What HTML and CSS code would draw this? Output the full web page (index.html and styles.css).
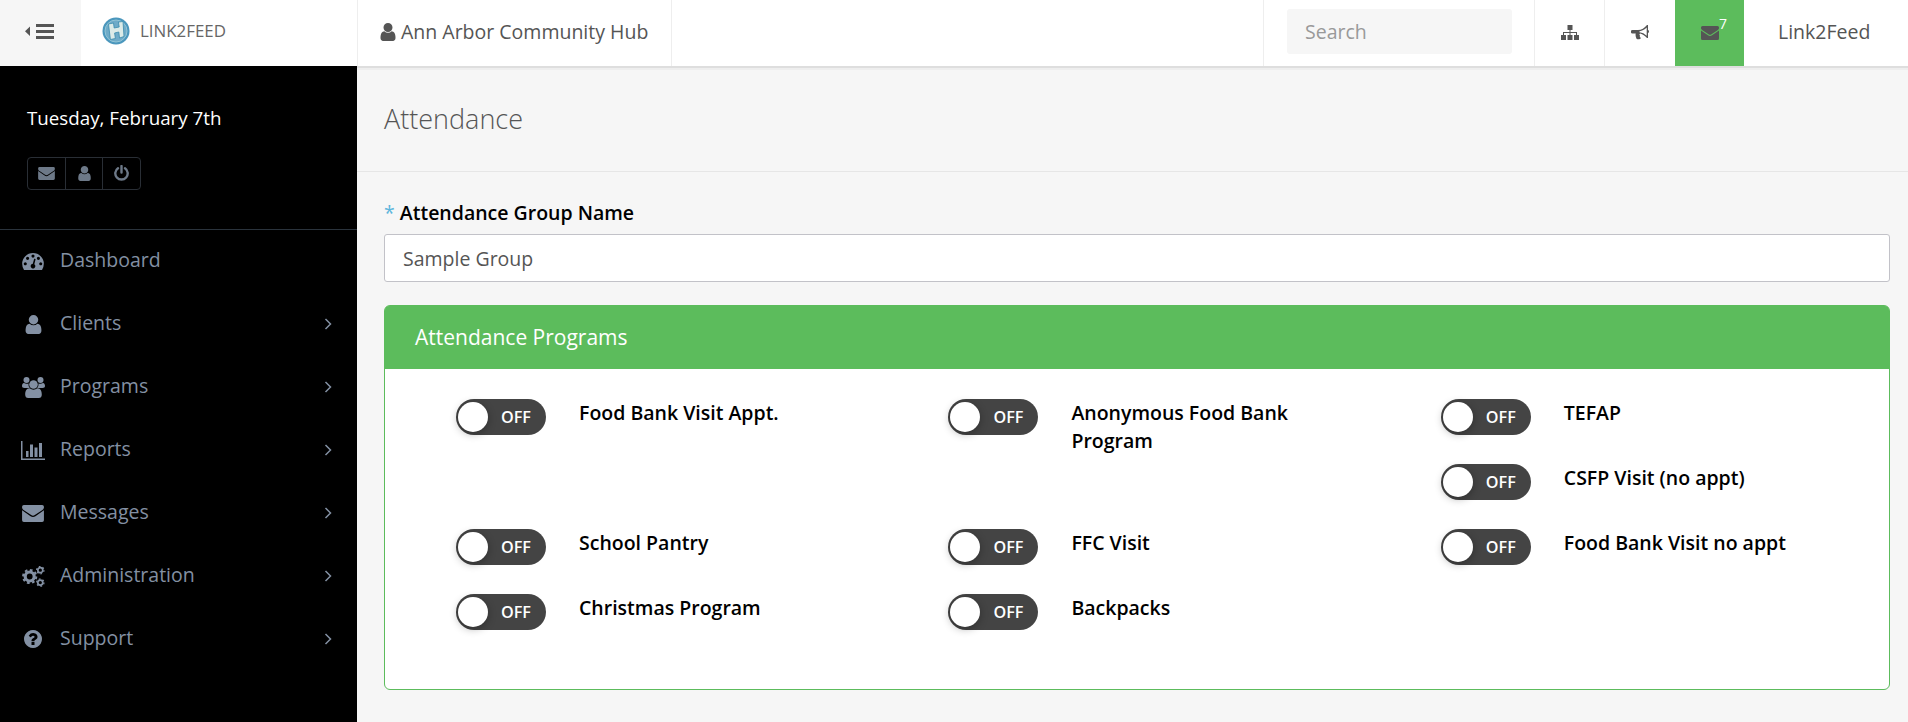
FILE: index.html
```html
<!DOCTYPE html>
<html lang="en">
<head>
  <meta charset="UTF-8">
  <title>Attendance - Link2Feed</title>
  <link rel="stylesheet" href="styles.css">
</head>
<body>

  <!-- icons used more than once -->
  <svg class="sprite" width="0" height="0">
    <symbol id="envelope" viewBox="0 0 18 14">
      <path d="M1.500 0h15A1.500 1.500 0 0 1 18 1.500v.6c0 .9-.7 1.700-1.500 2.200L10.500 8.300c-1 .7-2 .7-3 0L1.500 4.300C.7 3.800 0 3 0 2.100v-.6A1.500 1.500 0 0 1 1.500 0zM0 4.400l7 4.800c1.300.9 2.700.9 4 0l7-4.800v8.100a1.500 1.500 0 0 1-1.500 1.500h-15A1.500 1.500 0 0 1 0 12.500z"/>
    </symbol>
    <symbol id="user" viewBox="256 128 1280 1536">
      <path d="M1536 1399q0 109-62.500 187t-150.500 78h-854q-88 0-150.500-78t-62.500-187q0-85 8.500-160.500t31.500-152 58.500-131 94-89 134.500-34.500q131 128 313 128t313-128q76 0 134.500 34.500t94 89 58.500 131 31.500 152 8.500 160.500zm-256-887q0 159-112.500 271.500t-271.500 112.500-271.500-112.500-112.500-271.500 112.500-271.500 271.500-112.500 271.500 112.500 112.500 271.500z"/>
    </symbol>
    <symbol id="angle" viewBox="0 0 8 12">
      <path d="M1.500 1l5 5-5 5" fill="none" stroke="currentColor" stroke-width="1.500"/>
    </symbol>
  </svg>

  <header class="topbar">
    <a class="menu-toggle">
      <svg width="29" height="17" viewBox="0 0 29 17"><path d="M5 3.500v9.500L0 8.200zM11 1h18v3H11zM11 7h18v3H11zM11 13h18v3H11z"/></svg>
    </a>
    <a class="brand">
      <svg width="28" height="28" viewBox="0 0 28 28">
        <circle cx="14" cy="14" r="13.500" fill="#4b97bd"/>
        <circle cx="14" cy="14" r="11" fill="#6fabc8" stroke="#93c5d6"/>
        <path d="M6.500 7l5-1 .7 5 5-1-.8-5L21 4.500l1 15-4.500 1.500-.7-6-4.200 1 .8 5.500-5 1z" fill="#dcebe8" stroke="#398bad" stroke-width=".8"/>
      </svg>
      <span>LINK2FEED</span>
    </a>
    <a class="agency"><svg class="agency-icon"><use href="#user"/></svg>Ann Arbor Community Hub</a>
    <div class="search"><input type="text" placeholder="Search"></div>
    <a class="tool">
      <svg width="18" height="15" viewBox="0 0 18 15"><path d="M6.500 0h5v5h-2v2H16v3h2v5h-5v-5h2V8H9.500v2h2v5h-5v-5h2V8H3v2h2v5H0v-5h2V7h6.500V5h-2z"/></svg>
    </a>
    <a class="tool tool-news">
      <svg width="18" height="15" viewBox="0 0 18 15"><path d="M1.500 5H7c3.500 0 6.500-2 9-5h1v5q1 .4 1 1.500T17 8v5h-1c-2-2.400-4.200-4-6.800-4.600-1 .5-.9 1.500-.2 2.100-.5 1-.1 1.700 1 2.500-.7 1.600-3.500 1.700-4.500.7-.6-1.800-1.300-3.300-.8-5.200H1.500Q0 8.500 0 7.500V6q0-1 1.500-1zM8.500 6.200v1c2.700.3 5 1.500 7.200 3.500V2.400c-2.200 2-4.600 3.400-7.200 3.800z"/></svg>
    </a>
    <a class="tool tool-mail">
      <svg width="18" height="14"><use href="#envelope"/></svg>
      <span class="count">7</span>
    </a>
    <a class="account">Link2Feed</a>
  </header>

  <div class="layout">
    <aside class="sidebar">
      <div class="welcome">
        <div class="date">Tuesday, February 7th</div>
        <div class="btn-group">
          <a><svg width="17" height="13"><use href="#envelope"/></svg></a>
          <a><svg width="13" height="15"><use href="#user"/></svg></a>
          <a><svg width="15" height="16" viewBox="0 0 15 16"><path d="M4 3.200a6.200 6.200 0 1 0 7 0M7.500 1v6.500" fill="none" stroke="currentColor" stroke-width="2.400" stroke-linecap="round"/></svg></a>
        </div>
      </div>
      <nav>
        <a>
          <i><svg width="22" height="17" viewBox="0 256 1792 1408"><path d="M384 1152q0-53-37.500-90.500t-90.500-37.500-90.500 37.500-37.500 90.500 37.500 90.500 90.500 37.500 90.500-37.500 37.500-90.500zm192-448q0-53-37.500-90.500t-90.500-37.500-90.500 37.500-37.500 90.500 37.500 90.500 90.500 37.500 90.500-37.500 37.500-90.500zm428 481l101-382q6-26-7.500-48.500t-38.500-29.500-48 6.500-30 39.500l-101 382q-60 5-107 43.500t-63 98.500q-20 77 20 146t117 89 146-20 89-117q16-60-6-117t-72-91zm660-33q0-53-37.500-90.500t-90.500-37.500-90.500 37.500-37.500 90.500 37.500 90.500 90.500 37.500 90.500-37.500 37.500-90.500zm-640-640q0-53-37.500-90.500t-90.500-37.500-90.500 37.500-37.500 90.500 37.500 90.500 90.500 37.500 90.500-37.500 37.500-90.500zm448 192q0-53-37.500-90.500t-90.500-37.500-90.500 37.500-37.500 90.500 37.500 90.500 90.500 37.500 90.500-37.500 37.500-90.500zm320 448q0 261-141 483-19 29-54 29h-1402q-35 0-54-29-141-221-141-483 0-182 71-348t191-286 286-191 348-71 348 71 286 191 191 286 71 348z"/></svg></i>
          <span>Dashboard</span>
        </a>
        <a>
          <i><svg width="17" height="19"><use href="#user"/></svg></i>
          <span>Clients</span>
          <svg class="arrow"><use href="#angle"/></svg>
        </a>
        <a>
          <i><svg width="23" height="21" viewBox="0 0 23 21">
            <circle cx="4.500" cy="3" r="3"/><circle cx="18.500" cy="3" r="3"/><circle cx="11.500" cy="7.500" r="4.300"/>
            <path d="M2 6c1.500 1 3.300 1 4.600.4-.3 1.800.1 3.200 1.200 4.600H2.500C.8 11 0 10.300 0 9c0-1.500.6-3 2-3zM21 6c-1.500 1-3.300 1-4.600.4.3 1.800-.1 3.200-1.200 4.600h5.300C22.200 11 23 10.300 23 9c0-1.500-.6-3-2-3zM7.600 11.300c2.400 1.800 5.400 1.800 7.800 0 3.300-.1 4.400 3 4.400 6.400 0 2-1.200 3.300-3 3.300H6.200c-1.800 0-3-1.300-3-3.300 0-3.400 1.100-6.500 4.400-6.400z"/>
          </svg></i>
          <span>Programs</span>
          <svg class="arrow"><use href="#angle"/></svg>
        </a>
        <a>
          <i><svg width="24" height="19" viewBox="0 0 24 19"><path d="M0 0h1.500v17.500H24V19H0zM5 10h2.500v6H5zM9 3.500h3V16H9zM13.500 6.500h3V16h-3zM18 2h3v14h-3z"/></svg></i>
          <span>Reports</span>
          <svg class="arrow"><use href="#angle"/></svg>
        </a>
        <a>
          <i><svg width="22" height="17"><use href="#envelope"/></svg></i>
          <span>Messages</span>
          <svg class="arrow"><use href="#angle"/></svg>
        </a>
        <a>
          <i><svg class="gears" width="23" height="21" viewBox="0 0 23 21">
            <circle cx="7.700" cy="10.500" r="4.500" stroke-width="3.200"/>
            <circle cx="7.700" cy="10.500" r="6.600" stroke-width="2" stroke-dasharray="2.700 2.480"/>
            <circle cx="18.300" cy="4.200" r="2.500" stroke-width="1.700"/>
            <circle cx="18.300" cy="4.200" r="3.700" stroke-width="1.200" stroke-dasharray="1.700 2.170"/>
            <circle cx="18.300" cy="16.600" r="2.500" stroke-width="1.700"/>
            <circle cx="18.300" cy="16.600" r="3.700" stroke-width="1.200" stroke-dasharray="1.700 2.170"/>
          </svg></i>
          <span>Administration</span>
          <svg class="arrow"><use href="#angle"/></svg>
        </a>
        <a>
          <i><svg width="18" height="18" viewBox="128 128 1536 1536"><path d="M1024 1376v-192q0-14-9-23t-23-9h-192q-14 0-23 9t-9 23v192q0 14 9 23t23 9h192q14 0 23-9t9-23zm256-672q0-88-55.500-163t-138.500-116-170-41q-243 0-371 213-15 24 8 42l132 100q7 6 19 6 16 0 25-12 53-68 86-92 34-24 86-24 48 0 85.500 26t37.500 59q0 38-20 61t-68 45q-63 28-115.500 86.500t-52.500 125.500v36q0 14 9 23t23 9h192q14 0 23-9t9-23q0-19 21.500-49.500t54.500-49.500q32-18 49-28.500t46-35 44.500-48 28-60.500 12.500-81zm384 192q0 209-103 385.500t-279.500 279.500-385.500 103-385.500-103-279.500-279.500-103-385.500 103-385.500 279.500-279.500 385.500-103 385.500 103 279.500 279.500 103 385.500z"/></svg></i>
          <span>Support</span>
          <svg class="arrow"><use href="#angle"/></svg>
        </a>
      </nav>
    </aside>

    <main>
      <h1>Attendance</h1>
      <form class="content">
        <label class="field-label" for="groupName"><span class="required">*</span> Attendance Group Name</label>
        <input class="form-control" id="groupName" type="text" value="Sample Group">

        <section class="panel">
          <h2>Attendance Programs</h2>
          <div class="programs">
            <div class="program"><span class="switch">OFF</span><label>Food Bank Visit Appt.</label></div>
            <div class="program"><span class="switch">OFF</span><label>Anonymous Food Bank Program</label></div>
            <div class="program"><span class="switch">OFF</span><label>TEFAP</label></div>
            <div class="program last-col"><span class="switch">OFF</span><label>CSFP Visit (no appt)</label></div>
            <div class="program"><span class="switch">OFF</span><label>School Pantry</label></div>
            <div class="program"><span class="switch">OFF</span><label>FFC Visit</label></div>
            <div class="program"><span class="switch">OFF</span><label>Food Bank Visit no appt</label></div>
            <div class="program"><span class="switch">OFF</span><label>Christmas Program</label></div>
            <div class="program"><span class="switch">OFF</span><label>Backpacks</label></div>
          </div>
        </section>
      </form>
    </main>
  </div>

</body>
</html>
```
FILE: styles.css
```css
* {
  box-sizing: border-box;
}

body {
  margin: 0;
  height: 722px;
  overflow: hidden;
  display: flex;
  flex-direction: column;
  font-family: "Open Sans", sans-serif;
  font-size: 19.5px;
  color: #555;
  background: #f6f6f6;
}

svg {
  fill: currentColor;
  flex: none;
}

.sprite {
  position: absolute;
}

/* top bar */
.topbar {
  height: 66px;
  flex: none;
  display: flex;
  background: #fff;
  box-shadow: 0 2px 0 #dedede, 0 4px 0 #eee;
}

.topbar > * {
  display: flex;
  align-items: center;
}

.menu-toggle {
  width: 81px;
  padding: 0 0 3px 25px;
  background: #f6f6f6;
}

.brand {
  width: 276px;
  padding: 0 0 5px 21px;
  gap: 10px;
  font-size: 16.9px;
  color: #666;
}

.agency {
  width: 315px;
  padding: 0 0 3px 22px;
  border: solid #eee;
  border-width: 0 1px;
}

.agency-icon {
  width: 16px;
  height: 18px;
  margin-right: 5px;
}

.search {
  width: 271px;
  margin-left: auto;
  padding: 0 0 3px 23px;
  border-left: 1px solid #eee;
}

.search input {
  width: 225px;
  height: 45px;
  padding: 0 18px 1px;
  border: none;
  border-radius: 3px;
  background: #f6f6f6;
  font: inherit;
}

.search input::placeholder {
  color: #999;
}

.tool {
  position: relative;
  width: 70px;
  padding: 0 0 1px 26px;
  border-left: 1px solid #eee;
}

.tool-news {
  width: 71px;
}

.tool-mail {
  width: 69px;
  border: none;
  background: #5cbc5c;
}

.count {
  position: absolute;
  left: 44px;
  top: 15px;
  font-size: 14px;
  line-height: 18px;
  color: #fff;
}

.account {
  width: 164px;
  padding: 0 0 3px 34px;
}

/* sidebar */
.layout {
  flex: 1;
  display: flex;
}

.sidebar {
  width: 357px;
  flex: none;
  background: #000;
  color: #8390a3;
}

.welcome {
  height: 164px;
  padding: 38px 27px 0;
  border-bottom: 1px solid #2a333c;
}

.date {
  font-size: 18.75px;
  line-height: 28px;
  color: #fff;
}

.btn-group {
  display: flex;
  width: 114px;
  height: 33px;
  margin-top: 25px;
  border: 1px solid #292e35;
  border-radius: 4px;
  color: #6d7988;
}

.btn-group a {
  flex: 1;
  display: flex;
  align-items: center;
  justify-content: center;
  padding-bottom: 1px;
}

.btn-group a + a {
  border-left: 1px solid #292e35;
}

nav a {
  display: flex;
  align-items: center;
  height: 63px;
  padding: 0 25px 5px 21px;
}

nav i {
  width: 24px;
  margin: 4px 15px 0 0;
  display: flex;
  justify-content: center;
}

.gears {
  fill: none;
  stroke: currentColor;
}

.arrow {
  width: 8px;
  height: 12px;
  margin: 3px 0 0 auto;
}

/* page */
main {
  flex: 1;
  min-width: 0;
}

h1 {
  height: 106px;
  margin: 0;
  padding: 33px 27px 0;
  border-bottom: 1px solid #e6e6e6;
  font-size: 27px;
  font-weight: 300;
  line-height: 40px;
}

.content {
  padding: 27px 18px 0 27px;
}

.field-label {
  display: block;
  margin-bottom: 7px;
  font-weight: 600;
  line-height: 28px;
  color: #000;
}

.required {
  font-weight: 400;
  color: #5bb5dc;
}

.form-control {
  display: block;
  width: 100%;
  height: 48px;
  padding: 0 18px;
  border: 1px solid #c2c2c8;
  border-radius: 3px;
  background: #fff;
  font: inherit;
  color: #555;
}

.panel {
  height: 385px;
  margin-top: 23px;
  border: 1px solid #5cbc5c;
  border-radius: 6px;
  background: #fff;
}

h2 {
  height: 63px;
  margin: 0;
  padding: 0 30px;
  background: #5cbc5c;
  border-radius: 4px 4px 0 0;
  font-size: 21px;
  font-weight: 400;
  line-height: 62px;
  color: #fff;
}

.programs {
  display: grid;
  grid-template-columns: 492.4px 492.4px 1fr;
  grid-auto-rows: 65px;
  padding: 30px 0 0 71px;
}

.program {
  display: flex;
  align-items: flex-start;
}

.program label {
  width: 250px;
  margin-left: 33px;
  font-weight: 600;
  line-height: 28px;
  color: #000;
}

.last-col {
  grid-column: 3;
}

.switch {
  position: relative;
  width: 90px;
  height: 36px;
  padding-left: 45px;
  border-radius: 18px;
  background: #444;
  font-size: 16.2px;
  font-weight: 600;
  line-height: 36px;
  color: #fff;
}

.switch::before {
  content: "";
  position: absolute;
  left: 2px;
  top: 3px;
  width: 30px;
  height: 30px;
  border-radius: 50%;
  background: #fff;
  box-shadow: 0 2px 8px rgba(0, 0, 0, 0.3);
}
```
